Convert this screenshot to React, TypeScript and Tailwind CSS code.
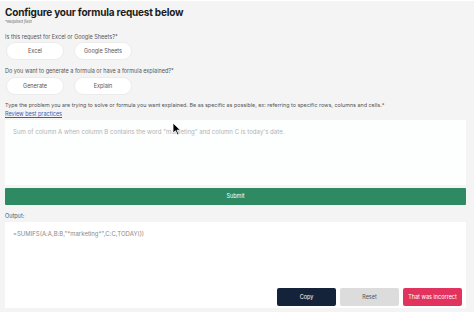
import React from "react";

function Pill({ children }: { children: React.ReactNode }) {
  return (
    <div className="w-[58px] h-[18px] rounded-full bg-white border border-[#ececec] flex items-center justify-center text-[5.5px] text-[#555]">
      {children}
    </div>
  );
}

export default function App() {
  return (
    <div
      className="relative w-[474px] h-[312px] overflow-hidden bg-[#f4f4f4] border-t border-white"
      style={{ fontFamily: "Inter, 'Noto Sans', sans-serif" }}
    >
      <div className="pt-[5px] px-[5px] flex flex-col">
        <h1 className="h-[12px] leading-[12px] text-[10px] font-bold text-[#1b1b1b] tracking-[-0.2px]">
          Configure your formula request below
        </h1>
        <div className="mt-[1px] h-[5px] leading-[5px] text-[3.8px] italic text-[#666]">*Required field</div>
        <div className="mt-[10px] h-[7px] leading-[7px] text-[5.5px] text-[#555]">
          Is this request for Excel or Google Sheets?*
        </div>
        <div className="mt-[1px] ml-[1px] flex gap-[10px]">
          <Pill>Excel</Pill>
          <Pill>Google Sheets</Pill>
        </div>
        <div className="mt-[8px] h-[7px] leading-[7px] text-[5.5px] text-[#555]">
          Do you want to generate a formula or have a formula explained?*
        </div>
        <div className="mt-[2px] ml-[1px] flex gap-[10px]">
          <Pill>Generate</Pill>
          <Pill>Explain</Pill>
        </div>
        <div className="mt-[7px] h-[7px] leading-[7px] text-[5.4px] text-[#555]">
          Type the problem you are trying to solve or formula you want explained. Be as specific as possible, ex: referring to specific rows, columns and cells.*
        </div>
        <div className="mt-[2px] h-[7px] leading-[7px] text-[5.5px] text-[#3a5bb8] underline">Review best practices</div>
        <div className="mt-[2px] w-[461px] h-[65px] bg-[#fdfefe] px-[8px] pt-[8px] text-[6.1px] leading-[8px] text-[#b3b3b3]">
          Sum of column A when column B contains the word "marketing" and column C is today's date.
        </div>
        <div className="mt-[3px] w-[461px] h-[17px] bg-[#2e8a62] rounded-[1px] flex items-center justify-center text-[5.5px] text-white">
          Submit
        </div>
        <div className="mt-[8px] h-[7px] leading-[7px] text-[5.5px] text-[#555]">Output:</div>
        <div className="mt-[2px] w-[461px] h-[86px] bg-white flex flex-col justify-between">
          <div className="px-[8px] pt-[8px] text-[6px] leading-[8px] text-[#8a8a8a]">
            =SUMIFS(A:A,B:B,"*marketing*",C:C,TODAY())
          </div>
          <div className="flex justify-end gap-[4px] pr-[4px] pb-[2px]">
            <div className="w-[59px] h-[18px] rounded-[2px] bg-[#14223a] flex items-center justify-center text-[5.5px] text-white">
              Copy
            </div>
            <div className="w-[59px] h-[18px] rounded-[2px] bg-[#dcdcdc] flex items-center justify-center text-[5.5px] text-[#555]">
              Reset
            </div>
            <div className="w-[59px] h-[18px] rounded-[2px] bg-[#e2335f] flex items-center justify-center text-[5.5px] text-white">
              That was incorrect
            </div>
          </div>
        </div>
      </div>
      <svg className="absolute left-[172px] top-[121px]" width="10" height="14" viewBox="0 0 10 14">
        <path d="M1 1 L1 11 L3.5 8.8 L5.5 13 L7 12.3 L5 8.2 L8.5 8.2 Z" fill="#000" stroke="#fff" strokeWidth="0.8" />
      </svg>
    </div>
  );
}
